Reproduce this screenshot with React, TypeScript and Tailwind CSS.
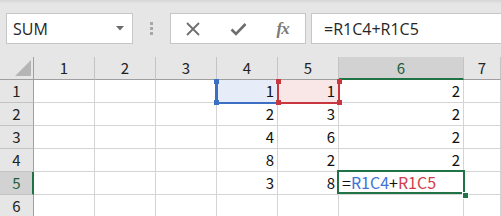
import React from "react";

const cellFont = { fontFamily: '"Noto Sans CJK JP", "Noto Sans", sans-serif' };

const data: (string | null)[][] = [
  [null, null, null, "1", "1", "2", null],
  [null, null, null, "2", "3", "2", null],
  [null, null, null, "4", "6", "2", null],
  [null, null, null, "8", "2", "2", null],
  [null, null, null, "3", "8", "F", null],
  [null, null, null, null, null, null, null],
];

function cellBg(r: number, c: number) {
  if (r === 0 && c === 3) return "bg-[#e7edf8]";
  if (r === 0 && c === 4) return "bg-[#f9e6e7]";
  return "bg-white";
}

export default function App() {
  return (
    <div className="w-[501px] h-[216px] overflow-hidden bg-[#e6e6e6] relative">
      {/* toolbar */}
      <div className="h-[57px] bg-gradient-to-b from-[#d6d6d6] via-[#e6e6e6] to-[#e6e6e6] bg-[length:100%_8px] bg-no-repeat">
        <div className="flex items-start pt-[13px]">
          <div className="ml-[6px] w-[127px] h-[31px] bg-white border border-[#c6c6c6] flex items-center pl-[6px] pr-[8px]">
            <span className="text-[16px] text-[#262626] flex-1" style={{ fontFamily: '"Open Sans", "Noto Sans", sans-serif' }}>SUM</span>
            <svg width="8" height="5" viewBox="0 0 8 5"><path d="M0 0H8L4 4.5Z" fill="#6b6b6b" /></svg>
          </div>
          <div className="w-[37px] h-[31px] flex flex-col items-center justify-center gap-[2px]">
            <div className="w-[3px] h-[3px] bg-[#a8a8a8]" />
            <div className="w-[3px] h-[3px] bg-[#a8a8a8]" />
            <div className="w-[3px] h-[3px] bg-[#a8a8a8]" />
          </div>
          <div className="w-[136px] h-[31px] bg-white border border-[#c6c6c6] flex items-center">
            <div className="w-[45px] flex justify-center">
              <svg width="14" height="14" viewBox="0 0 14 14"><path d="M1 1L13 13M13 1L1 13" stroke="#6e6e6e" strokeWidth="1.8" /></svg>
            </div>
            <div className="w-[45px] flex justify-center">
              <svg width="17" height="14" viewBox="0 0 17 14"><path d="M1.5 7.5L6 12L15.5 2" stroke="#6e6e6e" strokeWidth="2.6" fill="none" /></svg>
            </div>
            <div className="w-[45px] flex justify-center">
              <span className="italic font-bold text-[17px] text-[#7a7a7a] tracking-[-1px]" style={{ fontFamily: '"Liberation Serif", serif' }}>fx</span>
            </div>
          </div>
          <div className="ml-[5px] flex-1 h-[31px] bg-white border border-[#c6c6c6] border-r-0 flex items-center pl-[12px]">
            <span className="text-[16px] text-[#262626]" style={{ fontFamily: '"Open Sans", "Noto Sans", sans-serif' }}>=R1C4+R1C5</span>
          </div>
        </div>
      </div>

      {/* grid */}
      <div className="relative">
        <div className="grid grid-cols-[34px_61px_61px_61px_61px_61px_125px_1fr] grid-rows-[23px_23px_23px_23px_23px_23px_23px] text-[15px]" style={cellFont}>
          <div className="bg-[#e6e6e6] border-r border-b border-r-[#9f9f9f] border-b-[#9f9f9f] relative">
            <svg className="absolute left-[15px] top-[3px]" width="17" height="17" viewBox="0 0 17 17"><path d="M16 0V16H0Z" fill="#b5b5b5" /></svg>
          </div>
          {["1", "2", "3", "4", "5", "6", "7"].map((h) => (
            <div
              key={h}
              className={
                h === "6"
                  ? "bg-[#d2d2d2] border-r border-r-[#c4c4c4] border-b-2 border-b-[#217346] flex items-center justify-center text-[#1d5e3a] pt-[2px]"
                  : "bg-[#e6e6e6] border-r border-r-[#c4c4c4] border-b border-b-[#9f9f9f] flex items-center justify-center text-[#222]"
              }
            >
              {h}
            </div>
          ))}
          {data.map((row, r) => (
            <React.Fragment key={r}>
              <div
                className={
                  r === 4
                    ? "bg-[#d2d2d2] border-r-2 border-r-[#217346] border-b border-b-[#c4c4c4] flex items-center justify-center text-[#1d5e3a] pl-[1px]"
                    : "bg-[#e6e6e6] border-r border-r-[#9f9f9f] border-b border-b-[#c4c4c4] flex items-center justify-center text-[#222]"
                }
              >
                {r + 1}
              </div>
              {row.map((v, c) => (
                <div
                  key={c}
                  className={cellBg(r, c) + " border-r border-b border-[#d4d4d4] flex items-center justify-end pr-[3px] text-[#111]"}
                >
                  {v === "F" ? null : v}
                </div>
              ))}
            </React.Fragment>
          ))}
        </div>

        {/* R1C4 blue reference highlight */}
        <div className="absolute left-[215px] top-[22px] w-[3px] h-[25px] bg-[#3c6fc4]" />
        <div className="absolute left-[215px] top-[45px] w-[62px] h-[2px] bg-[#3c6fc4]" />
        <div className="absolute left-[214px] top-[22px] w-[5px] h-[5px] bg-[#3c6fc4]" />
        <div className="absolute left-[214px] top-[43px] w-[5px] h-[5px] bg-[#3c6fc4]" />

        {/* R1C5 red reference highlight */}
        <div className="absolute left-[277px] top-[22px] w-[2px] h-[25px] bg-[#c8363f]" />
        <div className="absolute left-[338px] top-[22px] w-[2px] h-[25px] bg-[#c8363f]" />
        <div className="absolute left-[277px] top-[45px] w-[63px] h-[2px] bg-[#c8363f]" />
        <div className="absolute left-[276px] top-[22px] w-[5px] h-[5px] bg-[#c8363f]" />
        <div className="absolute left-[337px] top-[22px] w-[5px] h-[5px] bg-[#c8363f]" />
        <div className="absolute left-[276px] top-[43px] w-[5px] h-[5px] bg-[#c8363f]" />
        <div className="absolute left-[337px] top-[43px] w-[5px] h-[5px] bg-[#c8363f]" />

        {/* active cell R5C6 */}
        <div
          className="absolute left-[337px] top-[113px] w-[128px] h-[24px] border-2 border-[#217346] bg-white flex items-center pl-[3px] text-[16px]"
          style={cellFont}
        >
          <span className="text-[#111]">=</span>
          <span className="text-[#3f74d6]">R1C4</span>
          <span className="text-[#111]">+</span>
          <span className="text-[#d23c4c]">R1C5</span>
        </div>
        <div className="absolute left-[462px] top-[135px] w-[5px] h-[5px] bg-[#217346] border border-white box-content" />
      </div>
    </div>
  );
}
